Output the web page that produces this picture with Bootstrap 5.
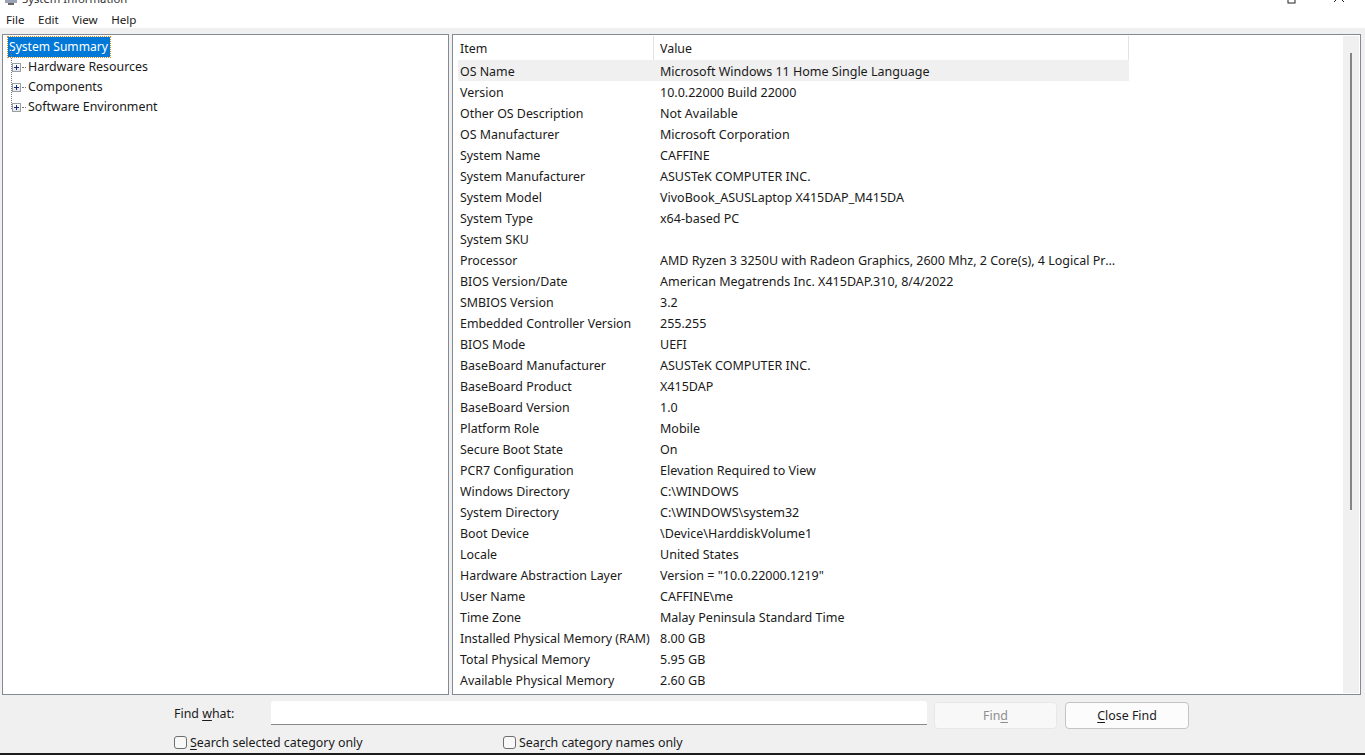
<!DOCTYPE html>
<html lang="en">
<head>
    <meta charset="UTF-8">
    <meta name="viewport" content="width=device-width, initial-scale=1">
    <title>System Information</title>
    <link href="https://cdn.jsdelivr.net/npm/bootstrap@5.3.3/dist/css/bootstrap.min.css" rel="stylesheet">
    <style>
        html,body{height:755px;overflow:hidden}
        body{background:#f0f0f0;font-family:"Noto Sans","Open Sans",sans-serif;font-size:12.4px;color:#1a1a1a;line-height:1}
        u{text-underline-offset:2px}
        .app-shell{height:755px;display:flex;flex-direction:column}
        .title-strip{height:10px;background:#fff;overflow:hidden;flex:none;padding-left:4px}
        .title-inner{height:16px;margin-top:-9px;display:flex;align-items:center}
        .title-text{margin-left:4px;color:#333;font-size:11.3px}
        .win-btns{margin-left:auto;display:flex;gap:36px;padding-right:20px}
        .menu-strip{height:18px;background:#fff;flex:none;display:flex;align-items:center;padding-left:6px;font-size:11.6px;padding-top:1px}
        .menu-strip span{margin-right:13.5px}
        .panes{height:667px;padding:6px 2px 0;display:flex;gap:3px;flex:none}
        .tree-pane{width:447px;background:#fff;border:1px solid #838a94;padding:2px 0 0 5px;font-size:12.4px}
        .list-pane{width:909px;background:#fff;border:1px solid #838a94;display:flex;padding:1px 1px 1px 5px}
        .list-scroll{flex:1;overflow:hidden}
        .tree-row{height:20px;display:flex;align-items:center;position:relative}
        .tree-sel{display:inline-block;background:#0078d7;color:#fff;font-size:12.1px;padding:4px 2px 3px 1px;outline:1px dotted #d08a2e;outline-offset:0}
        .tree-exp{width:9px;height:9px;border:1px solid #9a9ea6;margin-left:4px;margin-right:1px;flex:none;background:linear-gradient(#fff,#e4e6ec);position:relative}
        .tree-exp::before{content:"";position:absolute;left:1px;right:1px;top:3px;height:1px;background:#1c2a78}
        .tree-exp::after{content:"";position:absolute;top:1px;bottom:1px;left:3px;width:1px;background:#1c2a78}
        .tree-dot{width:4px;border-top:1px dotted #777;margin-right:2px;flex:none}
        .tree-line{position:absolute;left:3px;top:-8px;height:60px;border-left:1px dotted #777}
        .info-grid{width:671px;table-layout:fixed;margin:0;border-collapse:separate;border-spacing:0}
        .info-grid th{height:24px;font-weight:400;padding:3px 0 0 2px;vertical-align:middle;border-right:1px solid #e3e3e3}
        .info-grid th+th{padding-left:6px}
        .info-grid td{height:21px;padding:4px 0 0 2px;vertical-align:middle;white-space:nowrap;overflow:hidden;text-overflow:ellipsis}
        .info-grid td+td{padding-left:6px;padding-right:9px;font-size:12.52px}
        .row-hot td{background:#f0f0f0}
        .scroll-track{width:16px;background:#f0f0f0;flex:none;display:flex;justify-content:center;padding-top:17px}
        .scroll-thumb{width:2px;height:457px;background:#858585}
        .find-bar{flex:1;padding-left:174px;position:relative}
        .find-top{display:flex;align-items:flex-start;padding-top:6px}
        .find-label{width:97px;padding-top:7px}
        .find-input{width:656px;height:24px;background:#fff;border:0;border-bottom:1px solid #8a8a8a;border-radius:3px 3px 0 0}
        .find-btn{width:123px;height:27px;padding:1px 0 0;margin-left:7px;margin-top:1px;font-size:12.4px;line-height:1;border:1px solid #c4c4c4;border-radius:4px;background:#fcfcfc;color:#1a1a1a}
        .find-btn:disabled{background:#f8f8f8;border-color:#e8e8e8;color:#8f8f8f;opacity:1}
        .find-btn+.find-btn{width:124px;margin-left:8px}
        .find-checks{display:flex;padding-top:7px}
        .find-check{display:flex;align-items:center;gap:3px}
        .find-check:first-child{width:329px}
        .box-mark{width:13px;height:13px;margin-bottom:2px;background:#f8f8f8;border:1px solid #6e6e6e;border-radius:3px;flex:none}
        .edge-strip{height:2px;background:#1c1c1c;flex:none}
    </style>
</head>
<body>
<div class="app-shell">
    <div class="title-strip">
        <div class="title-inner">
            <svg width="14" height="14" viewBox="0 0 14 14"><rect x="1" y="2" width="12" height="9" fill="#9aa4b4"/><rect x="4" y="11" width="6" height="2" fill="#666"/></svg>
            <span class="title-text">System Information</span>
            <div class="win-btns">
                <svg width="10" height="16" viewBox="0 0 10 16"><rect x="1" y="5" width="7" height="7" fill="none" stroke="#222"/></svg>
                <svg width="12" height="16" viewBox="0 0 12 16"><path d="M1 1L11 11M11 1L1 11" stroke="#222" fill="none"/></svg>
            </div>
        </div>
    </div>
    <div class="menu-strip"><span>File</span><span>Edit</span><span>View</span><span>Help</span></div>
    <div class="panes">
        <div class="tree-pane">
            <div class="tree-row"><span class="tree-sel">System Summary</span></div>
            <div class="tree-row"><span class="tree-line"></span><span class="tree-exp"></span><span class="tree-dot"></span>Hardware Resources</div>
            <div class="tree-row"><span class="tree-exp"></span><span class="tree-dot"></span>Components</div>
            <div class="tree-row"><span class="tree-exp"></span><span class="tree-dot"></span>Software Environment</div>
        </div>
        <div class="list-pane">
            <div class="list-scroll">
                <table class="info-grid">
                    <colgroup><col style="width:196px"><col></colgroup>
                    <thead><tr><th>Item</th><th>Value</th></tr></thead>
                    <tbody id="infoBody"></tbody>
                </table>
            </div>
            <div class="scroll-track"><div class="scroll-thumb"></div></div>
        </div>
    </div>
    <div class="find-bar">
        <div class="find-top">
            <span class="find-label">Find <u>w</u>hat:</span>
            <input class="find-input" type="text" aria-label="Find what">
            <button class="find-btn" disabled>Fin<u>d</u></button>
            <button class="find-btn"><u>C</u>lose Find</button>
        </div>
        <div class="find-checks">
            <span class="find-check"><span class="box-mark"></span><span><u>S</u>earch selected category only</span></span>
            <span class="find-check"><span class="box-mark"></span><span>Sea<u>r</u>ch category names only</span></span>
        </div>
    </div>
    <div class="edge-strip"></div>
</div>
<script>
    const rows=[
        ['OS Name','Microsoft Windows 11 Home Single Language'],
        ['Version','10.0.22000 Build 22000'],
        ['Other OS Description','Not Available'],
        ['OS Manufacturer','Microsoft Corporation'],
        ['System Name','CAFFINE'],
        ['System Manufacturer','ASUSTeK COMPUTER INC.'],
        ['System Model','VivoBook_ASUSLaptop X415DAP_M415DA'],
        ['System Type','x64-based PC'],
        ['System SKU',''],
        ['Processor','AMD Ryzen 3 3250U with Radeon Graphics, 2600 Mhz, 2 Core(s), 4 Logical Processor(s)'],
        ['BIOS Version/Date','American Megatrends Inc. X415DAP.310, 8/4/2022'],
        ['SMBIOS Version','3.2'],
        ['Embedded Controller Version','255.255'],
        ['BIOS Mode','UEFI'],
        ['BaseBoard Manufacturer','ASUSTeK COMPUTER INC.'],
        ['BaseBoard Product','X415DAP'],
        ['BaseBoard Version','1.0'],
        ['Platform Role','Mobile'],
        ['Secure Boot State','On'],
        ['PCR7 Configuration','Elevation Required to View'],
        ['Windows Directory','C:\\WINDOWS'],
        ['System Directory','C:\\WINDOWS\\system32'],
        ['Boot Device','\\Device\\HarddiskVolume1'],
        ['Locale','United States'],
        ['Hardware Abstraction Layer','Version = "10.0.22000.1219"'],
        ['User Name','CAFFINE\\me'],
        ['Time Zone','Malay Peninsula Standard Time'],
        ['Installed Physical Memory (RAM)','8.00 GB'],
        ['Total Physical Memory','5.95 GB'],
        ['Available Physical Memory','2.60 GB']
    ];
    const body=document.getElementById('infoBody');
    rows.forEach((r,i)=>{
        const tr=document.createElement('tr');
        if(i===0) tr.className='row-hot';
        r.forEach(t=>{const td=document.createElement('td');td.textContent=t;tr.appendChild(td);});
        body.appendChild(tr);
    });
</script>
<script src="https://cdn.jsdelivr.net/npm/bootstrap@5.3.3/dist/js/bootstrap.bundle.min.js"></script>
</body>
</html>
